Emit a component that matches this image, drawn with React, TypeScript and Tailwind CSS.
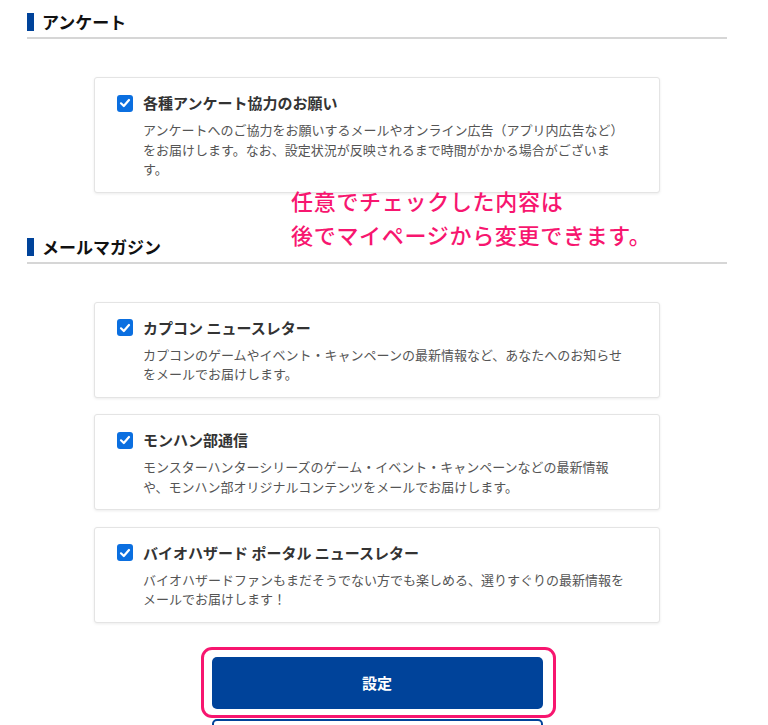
import React from "react";

const items = [
  {
    title: "カプコン ニュースレター",
    desc: "カプコンのゲームやイベント・キャンペーンの最新情報など、あなたへのお知らせをメールでお届けします。",
  },
  {
    title: "モンハン部通信",
    desc: "モンスターハンターシリーズのゲーム・イベント・キャンペーンなどの最新情報や、モンハン部オリジナルコンテンツをメールでお届けします。",
  },
  {
    title: "バイオハザード ポータル ニュースレター",
    desc: "バイオハザードファンもまだそうでない方でも楽しめる、選りすぐりの最新情報をメールでお届けします！",
  },
];

function Check() {
  return (
    <div className="flex h-[22px] w-[16px] shrink-0 items-center">
      <div className="flex h-[17px] w-[16px] items-center justify-center rounded-[3px] bg-[#0b6fe0]">
        <svg width="12" height="12" viewBox="0 0 12 12" fill="none">
          <path d="M2 6.3 L4.8 9 L10 3" stroke="white" strokeWidth="2.2" strokeLinecap="round" strokeLinejoin="round" />
        </svg>
      </div>
    </div>
  );
}

function Card({ title, desc }: { title: string; desc: string }) {
  return (
    <div className="mx-auto w-[566px] rounded-[3px] border border-[#e4e4e4] bg-white pt-[14px] pb-[13px] pl-[22px] pr-[30px] shadow-[0_1px_3px_rgba(0,0,0,0.08)]">
      <div className="flex gap-[10px]">
        <Check />
        <div className="flex-1">
          <div className="text-[15px] font-bold leading-[22px] text-[#333333]">{title}</div>
          <p className="mt-[6px] text-[13px] leading-[19.5px] text-[#555555]">{desc}</p>
        </div>
      </div>
    </div>
  );
}

function Heading({ children, className }: { children: React.ReactNode; className?: string }) {
  return (
    <div className={"border-b-2 border-[#d6d6d6] pb-[3px] " + (className ?? "")}>
      <div className="flex h-[24px] items-center gap-[8px]">
        <div className="h-[18px] w-[7px] bg-[#00439a]" />
        <h2 className="text-[17px] font-bold leading-[24px] text-[#111111]">{children}</h2>
      </div>
    </div>
  );
}

export default function App() {
  return (
    <div
      className="relative h-[725px] w-[768px] overflow-hidden bg-white"
      style={{ fontFamily: '"Noto Sans CJK JP", "Noto Sans", sans-serif' }}
    >
      <div className="ml-[27px] w-[700px] pt-[10px]">
        <Heading>アンケート</Heading>
        <div className="mt-[38px]">
          <Card
            title="各種アンケート協力のお願い"
            desc="アンケートへのご協力をお願いするメールやオンライン広告（アプリ内広告など）をお届けします。なお、設定状況が反映されるまで時間がかかる場合がございます。"
          />
        </div>

        <Heading className="mt-[42px]">メールマガジン</Heading>
        <div className="mt-[38px] flex flex-col gap-[16.5px]">
          {items.map((it) => (
            <Card key={it.title} title={it.title} desc={it.desc} />
          ))}
        </div>

        <div className="mt-[34.5px] flex flex-col items-center gap-[10px]">
          <button className="flex h-[52px] w-[331px] items-center justify-center rounded-[5px] bg-[#00439a] text-[15px] font-bold text-white">
            設定
          </button>
          <button
            aria-label="back"
            className="h-[52px] w-[331px] rounded-[5px] border-2 border-[#00439a] bg-white"
          />
        </div>
      </div>

      <div className="absolute left-[291px] top-[183px] text-[22px] font-medium leading-[34px] tracking-[0.7px] text-[#f7166f]">
        <div>任意でチェックした内容は</div>
        <div>後でマイページから変更できます。</div>
      </div>

      <div className="absolute left-[201px] top-[647px] h-[71px] w-[355px] rounded-[11px] border-[3px] border-[#f7166f]" />
    </div>
  );
}
